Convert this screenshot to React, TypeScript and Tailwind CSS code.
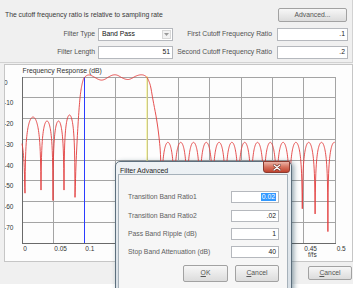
import React from "react";

const Y0 = 77;
const K = 2.075;
const dbToY = (db: number) => Y0 - db * K;

type P = [number, number];

function lobe(
  pts: P[],
  xa: number,
  xb: number,
  peak: number,
  depthA: number,
  depthB: number,
  xmin = -1e9,
  xmax = 1e9
) {
  const n = Math.ceil((xb - xa) * 4);
  for (let i = 0; i <= n; i++) {
    const x = xa + ((xb - xa) * i) / n;
    if (x < xmin || x > xmax) continue;
    const t = i / n;
    const s = Math.sin(Math.PI * t);
    let db = peak + 20 * Math.log10(Math.max(s, 1e-7));
    const d = t < 0.5 ? depthA : depthB;
    if (db < d) db = d;
    pts.push([x, dbToY(db)]);
  }
}

function catmull(points: P[], samples = 6): P[] {
  const out: P[] = [];
  const n = points.length;
  for (let i = 0; i < n - 1; i++) {
    const p0 = points[Math.max(i - 1, 0)];
    const p1 = points[i];
    const p2 = points[i + 1];
    const p3 = points[Math.min(i + 2, n - 1)];
    for (let s = 0; s < samples; s++) {
      const t = s / samples;
      const t2 = t * t;
      const t3 = t2 * t;
      const f = (a: number, b: number, c: number, d: number) =>
        0.5 *
        (2 * b +
          (-a + c) * t +
          (2 * a - 5 * b + 4 * c - d) * t2 +
          (-a + 3 * b - 3 * c + d) * t3);
      out.push([f(p0[0], p1[0], p2[0], p3[0]), f(p0[1], p1[1], p2[1], p3[1])]);
    }
  }
  out.push(points[n - 1]);
  return out;
}

function buildCurve(): string {
  const pts: P[] = [];
  lobe(pts, 9, 25, -27, -56, -56, 22);
  lobe(pts, 25, 41, -19.3, -56, -54.5);
  lobe(pts, 41, 53, -21.2, -54.5, -59.5);
  lobe(pts, 53, 64, -21.2, -59.5, -54.5);
  lobe(pts, 64, 75, -18.3, -54.5, -58);
  const main: P[] = [
    [75, dbToY(-58)],
    [76, 165],
    [77, 143],
    [78, 125],
    [79, 110],
    [80, 98],
    [81, 90],
    [82, 84.5],
    [83, 80.5],
    [84, 78],
    [86, 76],
    [88.3, 75],
    [91, 75.4],
    [95, 77.5],
    [98.5, 79.4],
    [101.7, 80.1],
    [105, 79.2],
    [108.5, 77],
    [112, 75.3],
    [115, 74.8],
    [118, 75.5],
    [121.5, 77.5],
    [125, 79],
    [128.3, 79.5],
    [131.5, 78.5],
    [135, 76.5],
    [138.5, 75.2],
    [141.7, 74.8],
    [144.5, 75.5],
    [147, 77.5],
    [149, 81.5],
    [150.7, 87],
    [153, 100],
    [156.7, 120],
    [159.3, 140],
    [160.7, 160],
    [161.5, dbToY(-62)],
  ];
  const mc = catmull(main, 5);
  for (let i = 1; i < mc.length; i++) pts.push(mc[i]);
  const start = 161.5;
  const sp = 12.8;
  const depths: number[] = [];
  for (let k = 0; k <= 14; k++) depths.push(-62);
  depths[11] = -63.5;
  depths[12] = -66;
  depths[13] = -74.5;
  depths[14] = -74.5;
  for (let k = 0; k <= 13; k++) {
    const a = start + sp * k;
    lobe(pts, a, a + sp, -31.5, depths[k], depths[k + 1], -1e9, 335);
  }
  return pts
    .map((p, i) => `${i === 0 ? "M" : "L"}${p[0].toFixed(2)} ${p[1].toFixed(2)}`)
    .join(" ");
}

const curve = buildCurve();
const gridX = Array.from({ length: 11 }, (_, k) => Math.floor(22 + k * 31.3) + 0.5);
const gridY = Array.from({ length: 9 }, (_, j) => Math.floor(77 + j * 20.75) + 0.5);
const yLabels = ["0", "-10", "-20", "-30", "-40", "-50", "-60", "-70"];
// Only the x labels that are not covered by the dialog
const xLabels: [number, string][] = [
  [0, "0"],
  [1, "0.05"],
  [2, "0.1"],
  [9, "0.45"],
  [10, "0.5"],
];

function Chart() {
  return (
    <svg width={347} height={196} viewBox="5 65 347 196" className="block">
      <text x={22.5} y={70.5} fontSize={6.8} fill="#333" dominantBaseline="central" fontFamily="'Liberation Sans', Arial, sans-serif">
        Frequency Response (dB)
      </text>
      {gridX.map((x, i) => (
        <line key={"gx" + i} x1={x} y1={77} x2={x} y2={243.5} stroke="#a4a4a4" strokeWidth={1} />
      ))}
      {gridY.map((y, i) => (
        <line key={"gy" + i} x1={22} y1={y} x2={336} y2={y} stroke="#a4a4a4" strokeWidth={1} />
      ))}
      <line x1={22.5} y1={77} x2={22.5} y2={244} stroke="#6a6a6a" strokeWidth={1} />
      <line x1={22} y1={243.5} x2={336} y2={243.5} stroke="#6a6a6a" strokeWidth={1} />
      {yLabels.map((l, j) => (
        <text key={"yl" + j} x={4} y={gridY[j] + 4.8} fontSize={6.5} fill="#333" dominantBaseline="central" fontFamily="'Liberation Sans', Arial, sans-serif">
          {l}
        </text>
      ))}
      {xLabels.map(([k, l]) => (
        <text key={"xl" + k} x={gridX[k] + (k === 10 ? 1.2 : 0.8)} y={248.3} fontSize={6.5} fill="#333" dominantBaseline="central" fontFamily="'Liberation Sans', Arial, sans-serif">
          {l}
        </text>
      ))}
      <text x={308} y={254} fontSize={6.5} fill="#333" dominantBaseline="central" fontFamily="'Liberation Sans', Arial, sans-serif">
        f/fs
      </text>
      <line x1={84.5} y1={77} x2={84.5} y2={243} stroke="#2a3cff" strokeWidth={1} />
      <line x1={147} y1={76} x2={147} y2={243} stroke="#f2ee6a" strokeWidth={1} />
      <path d={curve} fill="none" stroke="#e23c3c" strokeWidth={0.9} strokeLinejoin="round" />
    </svg>
  );
}

const btn =
  "flex items-center justify-center bg-linear-to-b from-[#f7f7f7] to-[#dcdcdc] border border-[#a2a2a2] rounded-[2px] text-[#555]";
const inp =
  "flex items-center justify-end pr-[2px] bg-white border border-[#b5b8bd] text-[#222]";

export default function App() {
  return (
    <div className="w-[359px] h-[288px] bg-white overflow-hidden relative font-['Liberation_Sans',Arial,sans-serif] text-[6.8px] leading-none">
      <div className="w-[353px] h-[284px] bg-[#f0f0f0] flex flex-col">
        <div className="h-[63px] border-r border-b border-[#d2d2d2] flex flex-col shrink-0">
          <div className="mt-[8px] h-[14px] flex items-center">
            <span className="pl-[5px] text-[#3a3a3a]">The cutoff frequency ratio is relative to sampling rate</span>
            <div className={`${btn} ml-auto mr-[5px] w-[69px] h-[14px]`}>Advanced...</div>
          </div>
          <div className="mt-[6px] h-[13px] flex items-center">
            <span className="w-[95px] text-right text-[#505050]">Filter Type</span>
            <div className="ml-[3px] w-[75px] h-[13px] flex items-center bg-white border border-[#b5b8bd]">
              <span className="pl-[3px] text-[#111] flex-1">Band Pass</span>
              <div className="w-[9px] h-[9px] mr-[1px] flex items-center justify-center bg-[#f2f2f2] border border-[#d8d8d8]">
                <svg width="5" height="3" viewBox="0 0 5 3">
                  <path d="M0 0 L5 0 L2.5 3 Z" fill="#9a9a9a" />
                </svg>
              </div>
            </div>
            <span className="w-[99px] text-right text-[#505050]">First Cutoff Frequency Ratio</span>
            <div className={`${inp} ml-[5px] w-[71px] h-[13px]`}>.1</div>
          </div>
          <div className="mt-[5px] h-[13px] flex items-center">
            <span className="w-[95px] text-right text-[#505050]">Filter Length</span>
            <div className={`${inp} ml-[3px] w-[75px] h-[13px]`}>51</div>
            <span className="w-[99px] text-right text-[#505050]">Second Cutoff Frequency Ratio</span>
            <div className={`${inp} ml-[5px] w-[71px] h-[13px]`}>.2</div>
          </div>
        </div>
        <div className="ml-[4px] mt-[1px] w-[349px] h-[198px] border border-[#c6c6c6] bg-[#fdfdfd] shrink-0">
          <Chart />
        </div>
        <div className="mt-[4px] flex justify-end pr-[1px]">
          <div className={`${btn} w-[44px] h-[14px]`}>
            <span>
              <span className="underline">C</span>ancel
            </span>
          </div>
        </div>
      </div>

      <div className="absolute left-[115px] top-[161px] w-[177px] h-[140px] border border-[#5d6f7d] rounded-t-[5px] bg-linear-to-b from-[#eef2f5] to-[#d6dee5] shadow-[2px_1px_5px_rgba(20,60,80,0.45)]">
        <div className="h-[12px] relative">
          <span className="absolute left-[4px] top-[5px] text-[7px] text-[#1e1e1e]">Filter Advanced</span>
          <div className="absolute top-[-1px] right-[1px] w-[27px] h-[12px] rounded-b-[3px] border border-[#8a3b30] bg-linear-to-b from-[#ebb3a7] via-[#d6735f] to-[#bf412d] flex items-center justify-center">
            <svg width="8" height="7" viewBox="0 0 8 7">
              <path d="M1 1 L7 6 M7 1 L1 6" stroke="#6b2a22" strokeWidth="2.6" strokeLinecap="round" />
              <path d="M1 1 L7 6 M7 1 L1 6" stroke="#ffffff" strokeWidth="1.3" strokeLinecap="round" />
            </svg>
          </div>
        </div>
        <div className="ml-[2px] w-[170px] h-[130px] border border-[#a6b1ba] bg-[#f6f6f6] flex flex-col">
          <div className="mt-[16px] h-[12px] flex items-center">
            <span className="flex-1 pl-[9px] text-[#606060]">Transition Band Ratio1</span>
            <div className={`${inp} w-[48px] h-[12px] mr-[8px]`}>
              <span className="bg-[#3399ff] text-white px-[1px] py-[1px]">0.02</span>
            </div>
          </div>
          <div className="mt-[7px] h-[12px] flex items-center">
            <span className="flex-1 pl-[9px] text-[#606060]">Transition Band Ratio2</span>
            <div className={`${inp} w-[48px] h-[12px] mr-[8px]`}>.02</div>
          </div>
          <div className="mt-[6px] h-[12px] flex items-center">
            <span className="flex-1 pl-[9px] text-[#606060]">Pass Band Ripple (dB)</span>
            <div className={`${inp} w-[48px] h-[12px] mr-[8px]`}>1</div>
          </div>
          <div className="mt-[6px] h-[12px] flex items-center">
            <span className="flex-1 pl-[9px] text-[#606060]">Stop Band Attenuation (dB)</span>
            <div className={`${inp} w-[48px] h-[12px] mr-[8px]`}>40</div>
          </div>
          <div className="mt-[7px] flex justify-end gap-[7px] mr-[8px]">
            <div className={`${btn} w-[45px] h-[17px]`}>
              <span>
                <span className="underline">O</span>K
              </span>
            </div>
            <div className={`${btn} w-[44px] h-[17px]`}>
              <span>
                <span className="underline">C</span>ancel
              </span>
            </div>
          </div>
        </div>
      </div>
    </div>
  );
}
